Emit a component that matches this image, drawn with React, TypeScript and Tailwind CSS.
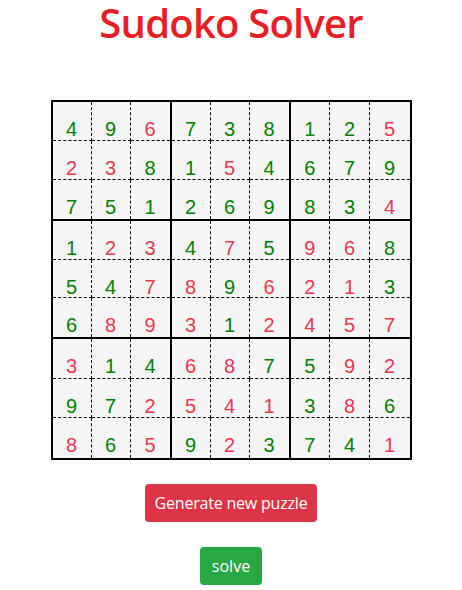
import React from "react";

const rows = [
  "4g9g6r7g3g8g1g2g5r",
  "2r3r8g1g5r4g6g7g9g",
  "7g5g1g2g6g9g8g3g4r",
  "1g2r3r4g7r5g9r6r8g",
  "5g4g7r8r9g6r2r1r3g",
  "6g8r9r3r1g2r4r5r7r",
  "3r1g4g6r8r7g5g9r2r",
  "9g7g2r5r4r1r3g8r6g",
  "8r6g5r9g2r3g7g4g1r",
];

const grid = rows.map((r) => {
  const out: { v: string; c: string }[] = [];
  for (let i = 0; i < r.length; i += 2) out.push({ v: r[i], c: r[i + 1] });
  return out;
});

function Box({ br, bc }: { br: number; bc: number }) {
  const cells = [];
  for (let r = 0; r < 3; r++) {
    for (let c = 0; c < 3; c++) {
      const cell = grid[br * 3 + r][bc * 3 + c];
      const cls = [
        "flex justify-center items-start pt-[17px] text-[20px] leading-[20px] bg-[#f5f5f5] border-black border-dashed",
        c < 2 ? "border-r" : "",
        r < 2 ? "border-b" : "",
        cell.c === "g" ? "text-[#008000]" : "text-[#e8384f]",
      ].join(" ");
      cells.push(
        <div key={`${r}-${c}`} className={cls}>
          {cell.v}
        </div>
      );
    }
  }
  return (
    <div
      className={[
        "grid grid-cols-3 grid-rows-3 border-black border-solid",
        bc < 2 ? "border-r-2" : "",
        br < 2 ? "border-b-2" : "",
      ].join(" ")}
    >
      {cells}
    </div>
  );
}

export default function App() {
  const boxes = [];
  for (let br = 0; br < 3; br++)
    for (let bc = 0; bc < 3; bc++) boxes.push(<Box key={`${br}${bc}`} br={br} bc={bc} />);
  return (
    <div className="w-[462px] h-[590px] bg-white flex flex-col items-center">
      <h1 className="text-[40px] leading-[46px] font-semibold text-[#e81e25] font-['Open_Sans',sans-serif] tracking-[-0.8px]">
        Sudoko Solver
      </h1>
      <div className="mt-[54px] w-[361px] h-[360px] border-2 border-black grid grid-cols-3 grid-rows-3 font-['Liberation_Sans',Arial,sans-serif]">
        {boxes}
      </div>
      <button className="mt-[24px] h-[38px] px-[10px] rounded-[4px] bg-[#dc3545] text-white text-[16px] tracking-[-0.2px] font-['Open_Sans',sans-serif]">
        Generate new puzzle
      </button>
      <button className="mt-[25px] h-[38px] px-[12px] rounded-[4px] bg-[#28a745] text-white text-[16px] font-['Open_Sans',sans-serif]">
        solve
      </button>
    </div>
  );
}
